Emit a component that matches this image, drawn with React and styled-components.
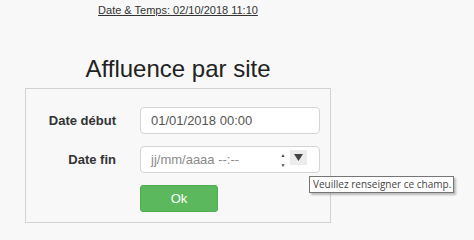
import React from 'react';
import styled, { createGlobalStyle } from 'styled-components';

const Global = createGlobalStyle`
  html, body {
    margin: 0;
    padding: 0;
    background: #f8f8f8;
  }
  body {
    font-family: "Liberation Sans", Arial, sans-serif;
    color: #333;
  }
`;

const Page = styled.div`
  width: 474px;
  height: 233px;
  overflow: hidden;
`;

const Column = styled.div`
  width: 306px;
  margin-left: 25px;
  display: flex;
  flex-direction: column;
  align-items: center;
`;

const Clock = styled.a`
  margin-top: 4px;
  font-size: 11px;
  line-height: 13px;
  color: #333;
  text-decoration: underline;
`;

const Title = styled.h1`
  margin: 38px 0 0;
  font-size: 24px;
  line-height: 28px;
  font-weight: normal;
  color: #222;
`;

const Box = styled.form`
  align-self: stretch;
  margin-top: 5px;
  border: 1px solid #d2d2d2;
  padding: 18px 12px 10px 0;
  display: grid;
  grid-template-columns: 90px 180px;
  column-gap: 24px;
  row-gap: 12px;
  align-items: center;
`;

const Label = styled.label`
  text-align: right;
  font-size: 13px;
  font-weight: bold;
  color: #333;
`;

const Field = styled.div`
  position: relative;
  box-sizing: border-box;
  height: 27px;
  border: 1px solid #d4d4d4;
  border-radius: 4px;
  background: #fff;
  padding-left: 10px;
  display: flex;
  align-items: center;
  font-size: 13px;
  color: ${p => (p.$placeholder ? '#8a8a8a' : '#555')};
`;

const Value = styled.span`
  flex: 1;
`;

const Spin = styled.span`
  display: flex;
  flex-direction: column;
  justify-content: space-between;
  height: 15px;
  width: 8px;
  margin-right: 3px;
  margin-top: 2px;
  font-size: 5px;
  line-height: 5px;
  color: #444;
  text-align: center;
`;

const Drop = styled.span`
  width: 17px;
  height: 15px;
  margin-right: 12px;
  background: #ececec;
  display: flex;
  align-items: center;
  justify-content: center;
  margin-top: -4px;
`;

const Tooltip = styled.div`
  position: absolute;
  left: 168px;
  top: 29px;
  white-space: nowrap;
  background: #fff;
  border: 1px solid #767676;
  box-shadow: 2px 2px 2px rgba(0, 0, 0, 0.25);
  padding: 0 2px 0 3px;
  height: 15px;
  line-height: 15px;
  font-family: "Open Sans", "Noto Sans", sans-serif;
  font-size: 10px;
  color: #444;
  z-index: 2;
`;

const Button = styled.button`
  grid-column: 2;
  justify-self: start;
  width: 78px;
  height: 27px;
  border: 1px solid #4cae4c;
  border-radius: 3px;
  background: #5cb85c;
  color: #fff;
  font-family: "Liberation Sans", Arial, sans-serif;
  font-size: 13px;
  padding: 0;
`;

export default function App() {
  return (
    <Page>
      <Global />
      <Column>
        <Clock>Date &amp; Temps: 02/10/2018 11:10</Clock>
        <Title>Affluence par site</Title>
        <Box onSubmit={e => e.preventDefault()}>
          <Label>Date début</Label>
          <Field>
            <Value>01/01/2018 00:00</Value>
          </Field>
          <Label>Date fin</Label>
          <Field $placeholder>
            <Value>jj/mm/aaaa --:--</Value>
            <Spin>
              <span>▲</span>
              <span>▼</span>
            </Spin>
            <Drop>
              <svg width="9" height="7" viewBox="0 0 9 7">
                <path d="M0 0 H9 L4.5 7 Z" fill="#444" />
              </svg>
            </Drop>
            <Tooltip>Veuillez renseigner ce champ.</Tooltip>
          </Field>
          <Button type="submit">Ok</Button>
        </Box>
      </Column>
    </Page>
  );
}
